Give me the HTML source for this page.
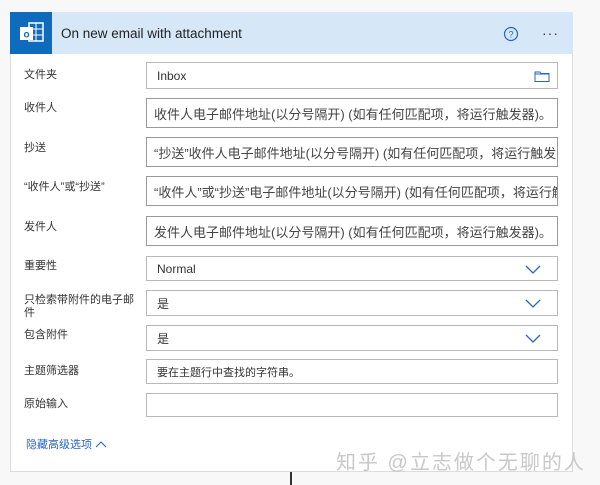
<!DOCTYPE html><html><head><meta charset="utf-8"><style>
body{margin:0;width:600px;height:485px;background:#f8f8f8;font-family:"Liberation Sans","Noto Sans CJK SC",sans-serif;position:relative;overflow:hidden}
.card{position:absolute;left:10px;top:12px;width:563px;height:460px;background:#fff;border:1px solid #ddd;box-sizing:border-box}
.hdr{position:absolute;left:10px;top:12px;width:563px;height:42px;background:#d6e8f8}
.ic{position:absolute;left:10px;top:12px;width:42px;height:42px;background:#0f6cbd}
.title{position:absolute;left:61px;top:26px;font-size:13.5px;color:#222}
.lbl{position:absolute;left:24px;font-size:11px;color:#333;line-height:13px}
.in{position:absolute;left:146px;width:412px;box-sizing:border-box;border:1px solid #b8b8b8;background:#fff;font-size:12px;color:#333;padding-left:10px;white-space:nowrap;overflow:hidden;display:flex;align-items:center}
.big{font-size:13px;color:#444;padding-left:7px;border-color:#999}
.chev{position:absolute;right:16px;top:8px}
</style></head><body>
<div class="card"></div>
<div class="hdr"></div>
<div class="ic"><svg width="42" height="42"><rect x="19" y="11" width="14" height="18" fill="none" stroke="#fff" stroke-width="1.5"/><line x1="19" y1="17" x2="33" y2="17" stroke="#fff"/><line x1="19" y1="23" x2="33" y2="23" stroke="#fff"/><line x1="26" y1="11" x2="26" y2="29" stroke="#fff"/><rect x="10" y="15" width="13" height="13" fill="#fff"/><text x="16.5" y="25.5" font-size="10" font-weight="bold" fill="#0f6cbd" text-anchor="middle" font-family="Liberation Sans">o</text></svg></div>
<div class="title">On new email with attachment</div>
<svg style="position:absolute;left:503px;top:26px" width="16" height="16"><circle cx="8" cy="8" r="6.5" fill="none" stroke="#2866c1" stroke-width="1.2"/><text x="8" y="11.5" font-size="9" fill="#2866c1" text-anchor="middle" font-family="Liberation Sans">?</text></svg>
<div style="position:absolute;left:542px;top:25px;font-size:14px;color:#333;letter-spacing:1px">···</div>

<div class="lbl" style="top:69px">文件夹</div>
<div class="in" style="top:62px;height:27px">Inbox<svg style="position:absolute;right:7px;top:7px" width="16" height="12"><path d="M1 2h5l1 1.5h8v8H1z M1 4h14" fill="none" stroke="#2866c1" stroke-width="1"/></svg></div>
<div class="lbl" style="top:102px">收件人</div>
<div class="in big" style="top:98px;height:30px">收件人电子邮件地址(以分号隔开) (如有任何匹配项，将运行触发器)。</div>
<div class="lbl" style="top:142px">抄送</div>
<div class="in big" style="top:137px;height:30px">“抄送”收件人电子邮件地址(以分号隔开) (如有任何匹配项，将运行触发器)。</div>
<div class="lbl" style="top:181px">“收件人”或“抄送”</div>
<div class="in big" style="top:176px;height:30px">“收件人”或“抄送”电子邮件地址(以分号隔开) (如有任何匹配项，将运行触发器)。</div>
<div class="lbl" style="top:221px">发件人</div>
<div class="in big" style="top:216px;height:30px">发件人电子邮件地址(以分号隔开) (如有任何匹配项，将运行触发器)。</div>
<div class="lbl" style="top:260px">重要性</div>
<div class="in" style="top:256px;height:25px">Normal<svg class="chev" width="16" height="10"><path d="M1 1l7 7 7-7" fill="none" stroke="#2866c1" stroke-width="1.3"/></svg></div>
<div class="lbl" style="top:294px;width:115px">只检索带附件的电子邮件</div>
<div class="in" style="top:290px;height:26px">是<svg class="chev" width="16" height="10"><path d="M1 1l7 7 7-7" fill="none" stroke="#2866c1" stroke-width="1.3"/></svg></div>
<div class="lbl" style="top:329px">包含附件</div>
<div class="in" style="top:325px;height:26px">是<svg class="chev" width="16" height="10"><path d="M1 1l7 7 7-7" fill="none" stroke="#2866c1" stroke-width="1.3"/></svg></div>
<div class="lbl" style="top:365px">主题筛选器</div>
<div class="in" style="top:359px;height:25px;font-size:11px">要在主题行中查找的字符串。</div>
<div class="lbl" style="top:398px">原始输入</div>
<div class="in" style="top:393px;height:24px"></div>
<div style="position:absolute;left:26px;top:436px;font-size:11px;color:#2866c1">隐藏高级选项 <svg width="12" height="8"><path d="M1 7l5-5 5 5" fill="none" stroke="#2866c1" stroke-width="1.1"/></svg></div>
<div style="position:absolute;left:336px;top:446px;font-size:20px;color:#c8c8c8;letter-spacing:2px">知乎 @立志做个无聊的人</div>
<div style="position:absolute;left:290px;top:472px;width:1.5px;height:13px;background:#333"></div>
</body></html>
